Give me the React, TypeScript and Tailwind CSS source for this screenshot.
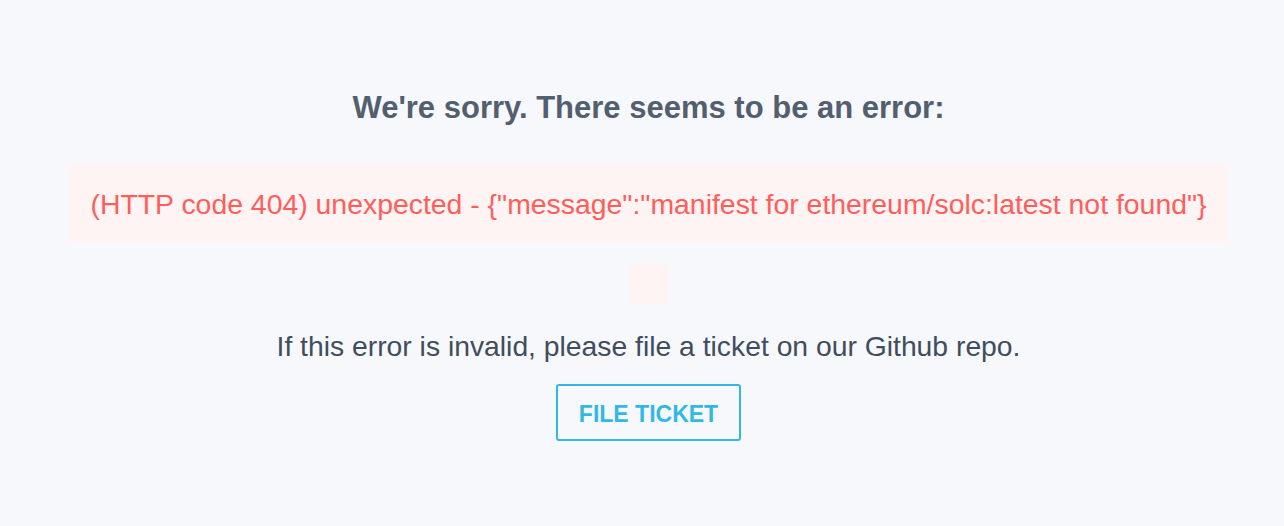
export default function App() {
  return (
    <div
      className="w-full h-[526px] bg-[#f7f8fc] pl-[13px] flex flex-col items-center"
      style={{ fontFamily: '"Liberation Sans", Arial, sans-serif' }}
    >
      <h1 className="mt-[89px] text-[31px] leading-[38px] font-bold text-[#525f6f]">
        We're sorry. There seems to be an error:
      </h1>
      <div className="mt-[37px] self-stretch mx-[57px] h-[79px] bg-[#fff4f4] rounded-[3px] flex items-center justify-center pt-[2px]">
        <span className="text-[28.4px] text-[#ff5e5a]">
          (HTTP code 404) unexpected - {'{"message":"manifest for ethereum/solc:latest not found"}'}
        </span>
      </div>
      <div className="mt-[21px] w-[40px] h-[39px] bg-[#fff4f4] rounded-[3px]" />
      <p className="mt-[26px] text-[28.3px] leading-[34px] text-[#3f4d5e]">
        If this error is invalid, please file a ticket on our Github repo.
      </p>
      <button className="mt-[21px] w-[185px] h-[57px] border-2 border-[#33b8e6] rounded-[3px] pt-[3px] text-[23px] font-bold text-[#33b8e6]">
        FILE TICKET
      </button>
    </div>
  );
}
